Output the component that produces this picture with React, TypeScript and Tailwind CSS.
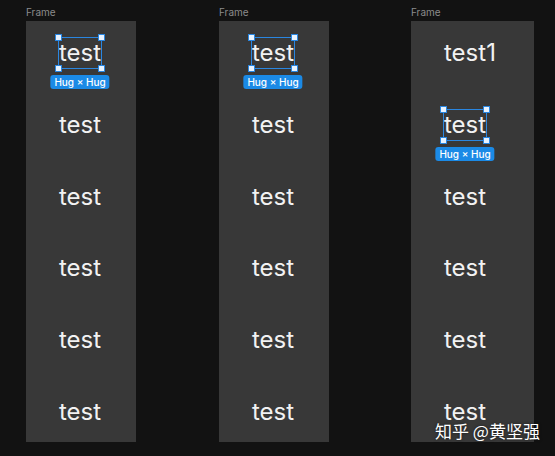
import React from 'react';

const Handle = ({ pos }: { pos: string }) => (
  <span className={`absolute w-[7px] h-[7px] bg-[#e8f3ff] border border-[#2a86e0] ${pos}`} />
);

const Item = ({ label, selected }: { label: string; selected?: boolean }) => (
  <div className="h-8 flex justify-start">
    <div className="relative h-8 px-px flex items-center">
      <span className="text-[24px] leading-8 text-[#f2f2f2]">{label}</span>
      {selected && (
        <>
          <span className="absolute inset-0 border border-[#2a86e0]" />
          <Handle pos="-left-[3px] -top-[3px]" />
          <Handle pos="-right-[3px] -top-[3px]" />
          <Handle pos="-left-[3px] -bottom-[3px]" />
          <Handle pos="-right-[3px] -bottom-[3px]" />
          <span className="absolute left-1/2 -translate-x-1/2 top-[38px] h-[14px] px-[4px] rounded-[3px] bg-[#1b8ae6] text-white text-[10px] leading-[14px] font-medium whitespace-nowrap">
            Hug × Hug
          </span>
        </>
      )}
    </div>
  </div>
);

const Frame = ({ width, items, selectedIndex }: { width: string; items: string[]; selectedIndex: number }) => (
  <div className={`flex flex-col ${width}`}>
    <div className="h-[21px] pt-[6px] text-[10px] leading-[12px] text-[#8c8c8c]">Frame</div>
    <div className="h-[421px] bg-[#383838] flex flex-col pt-4 pl-8 gap-[39.8px]">
      {items.map((t, i) => (
        <Item key={i} label={t} selected={i === selectedIndex} />
      ))}
    </div>
  </div>
);

export default function App() {
  const base = ['test', 'test', 'test', 'test', 'test', 'test'];
  return (
    <div className="relative w-[555px] h-[456px] bg-[#121212] overflow-hidden flex pl-[26px]" style={{ fontFamily: 'Inter, "Noto Sans", sans-serif' }}>
      <Frame width="w-[110px]" items={base} selectedIndex={0} />
      <div className="w-[83px]" />
      <Frame width="w-[110px]" items={base} selectedIndex={0} />
      <div className="w-[82px]" />
      <Frame width="w-[123px]" items={['test1', 'test', 'test', 'test', 'test', 'test']} selectedIndex={1} />

      {/* watermark */}
      <div
        className="absolute left-[435px] top-[419px] text-[17px] leading-6 text-white whitespace-nowrap [text-shadow:0_0_3px_rgba(0,0,0,0.6)]"
        style={{ fontFamily: '"Noto Sans CJK SC", sans-serif' }}
      >
        知乎 @黄坚强
      </div>
    </div>
  );
}
